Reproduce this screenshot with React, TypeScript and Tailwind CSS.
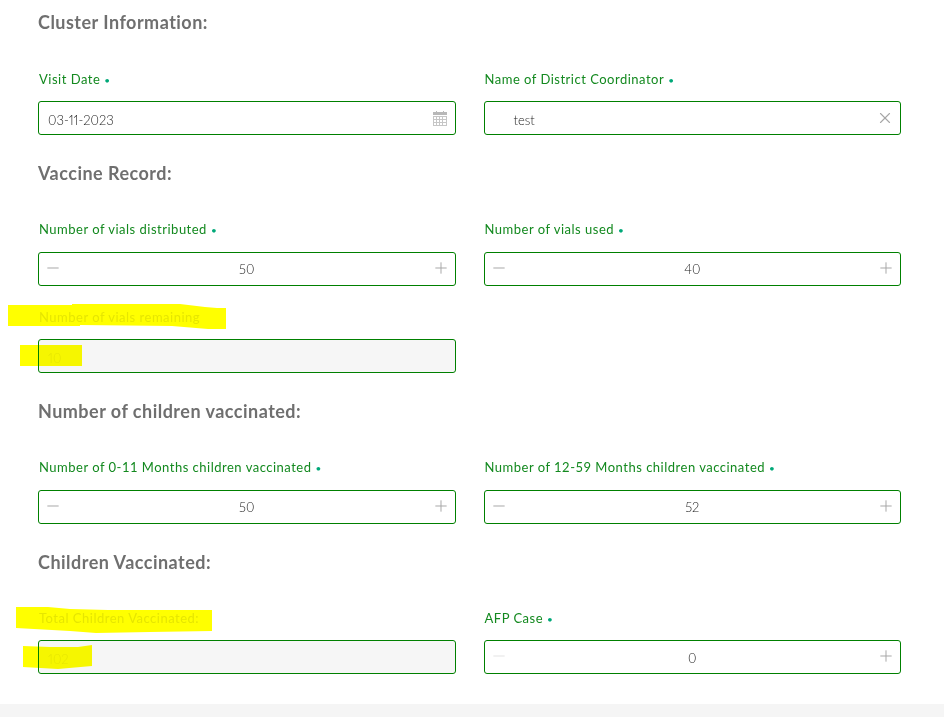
import type { ReactNode } from 'react';
import { Minus, Plus, X } from 'lucide-react';

function Heading({ children, className = '' }: { children: ReactNode; className?: string }) {
  return <h2 className={`text-[18px] leading-6 font-bold tracking-[0.48px] text-[#6f6f6f] ${className}`}>{children}</h2>;
}

function Label({ text, required = true, muted = false }: { text: string; required?: boolean; muted?: boolean }) {
  return (
    <div className={`ml-px h-5 text-[13px] leading-5 tracking-[0.5px] ${muted ? 'text-[#e6e600]' : 'text-[#13891f]'}`}>
      {text}
      {required && <span className="ml-1 text-[10px] text-[#00a878]">•</span>}
    </div>
  );
}

function Box({ children, disabled = false }: { children: ReactNode; disabled?: boolean }) {
  return (
    <div
      className={`mt-[12.5px] flex h-[34px] items-center rounded-[3px] border border-[#008000] px-[9px] text-[13px] font-light text-[#222] proportional-nums ${
        disabled ? 'bg-[#f6f6f6]' : 'bg-white'
      }`}
    >
      {children}
    </div>
  );
}

function CalendarIcon() {
  return (
    <svg width="14" height="15" viewBox="0 0 14 15" className="mr-[-1px] ml-auto text-[#b8b8b8]">
      <rect x="0" y="1" width="14" height="3" fill="currentColor" />
      <rect x="3" y="0" width="1" height="2" fill="currentColor" />
      <rect x="10" y="0" width="1" height="2" fill="currentColor" />
      <path
        d="M0 5h14v10H0zM1 6v2h2V6zm3 0v2h2V6zm3 0v2h2V6zm3 0v2h3V6zM1 9v2h2V9zm3 0v2h2V9zm3 0v2h2V9zm3 0v2h3V9zM1 12v2h2v-2zm3 0v2h2v-2zm3 0v2h2v-2zm3 0v2h3v-2z"
        fill="currentColor"
        fillRule="evenodd"
        opacity="0.8"
      />
    </svg>
  );
}

function NumberBox({ value, minusOff = false }: { value: string; minusOff?: boolean }) {
  return (
    <Box>
      <Minus size={18} strokeWidth={1.3} className={`-mt-0.5 -ml-1 ${minusOff ? 'text-[#e2e2e2]' : 'text-[#a6a6a6]'}`} />
      <span className="flex-1 pt-0.5 text-center">{value}</span>
      <Plus size={18} strokeWidth={1.3} className="-mt-0.5 -mr-1 text-[#a6a6a6]" />
    </Box>
  );
}

// marker strokes painted over the form; multiply keeps the border and grey fill visible underneath
function Marker({ points, className }: { points: string; className: string }) {
  return (
    <svg className={`pointer-events-none absolute overflow-visible mix-blend-multiply ${className}`} width="1" height="1">
      <polygon points={points} fill="#ffff00" />
    </svg>
  );
}

export default function App() {
  return (
    <div className="flex min-h-[717px] flex-col bg-white font-['Lato',sans-serif]">
      <div className="pt-[10px] pr-[43px] pl-[38px]">
        <Heading>Cluster Information:</Heading>
        <div className="mt-[34.9px] grid grid-cols-2 gap-x-7">
          <div>
            <Label text="Visit Date" />
            <Box>
              <span className="pt-1">03-11-2023</span>
              <CalendarIcon />
            </Box>
          </div>
          <div>
            <Label text="Name of District Coordinator" />
            <Box>
              <span className="ml-[20px] pt-1">test</span>
              <X size={18} strokeWidth={1.5} className="mr-[-3px] ml-auto text-[#a6a6a6]" />
            </Box>
          </div>
        </div>

        <Heading className="mt-[25.6px]">Vaccine Record:</Heading>
        <div className="mt-[34.3px] grid grid-cols-2 gap-x-7">
          <div>
            <Label text="Number of vials distributed" />
            <NumberBox value="50" />
          </div>
          <div>
            <Label text="Number of vials used" />
            <NumberBox value="40" />
          </div>
        </div>
        <div className="mt-[21.1px] grid grid-cols-2 gap-x-7">
          <div className="relative">
            <Label text="Number of vials remaining" required={false} muted />
            <Box disabled>
              <span className="pt-1 text-[#e6e600]">10</span>
            </Box>
            <Marker
              className="top-0 left-0"
              points="-30,-2 34,-2 34,-3 142,-3 167,0 179,1 188,1 188,22 170,22 134,19 42,18 42,19 -30,19"
            />
            <Marker className="top-0 left-0" points="-18,38 44,38 44,59 -18,59" />
          </div>
        </div>

        <Heading className="mt-[25.8px]">Number of children vaccinated:</Heading>
        <div className="mt-[33.9px] grid grid-cols-2 gap-x-7">
          <div>
            <Label text="Number of 0-11 Months children vaccinated" />
            <NumberBox value="50" />
          </div>
          <div>
            <Label text="Number of 12-59 Months children vaccinated" />
            <NumberBox value="52" />
          </div>
        </div>

        <Heading className="mt-[26.4px]">Children Vaccinated:</Heading>
        <div className="mt-[33.9px] grid grid-cols-2 gap-x-7">
          <div className="relative">
            <Label text="Total Children Vaccinated:" required={false} muted />
            <Box disabled>
              <span className="pt-1 text-[#e6e600]">102</span>
            </Box>
            <Marker
              className="top-0 left-0"
              points="-22,-1 10,-1 32,1 70,2 174,2 174,23 112,24 58,25 32,23 -22,20"
            />
            <Marker className="top-0 left-0" points="-15,38 12,39 40,39 54,37 54,58 20,61 -15,59" />
          </div>
          <div>
            <Label text="AFP Case" />
            <NumberBox value="0" minusOff />
          </div>
        </div>
      </div>
      <div className="mt-[29.6px] flex-1 bg-[#f5f5f5]" />
    </div>
  );
}
